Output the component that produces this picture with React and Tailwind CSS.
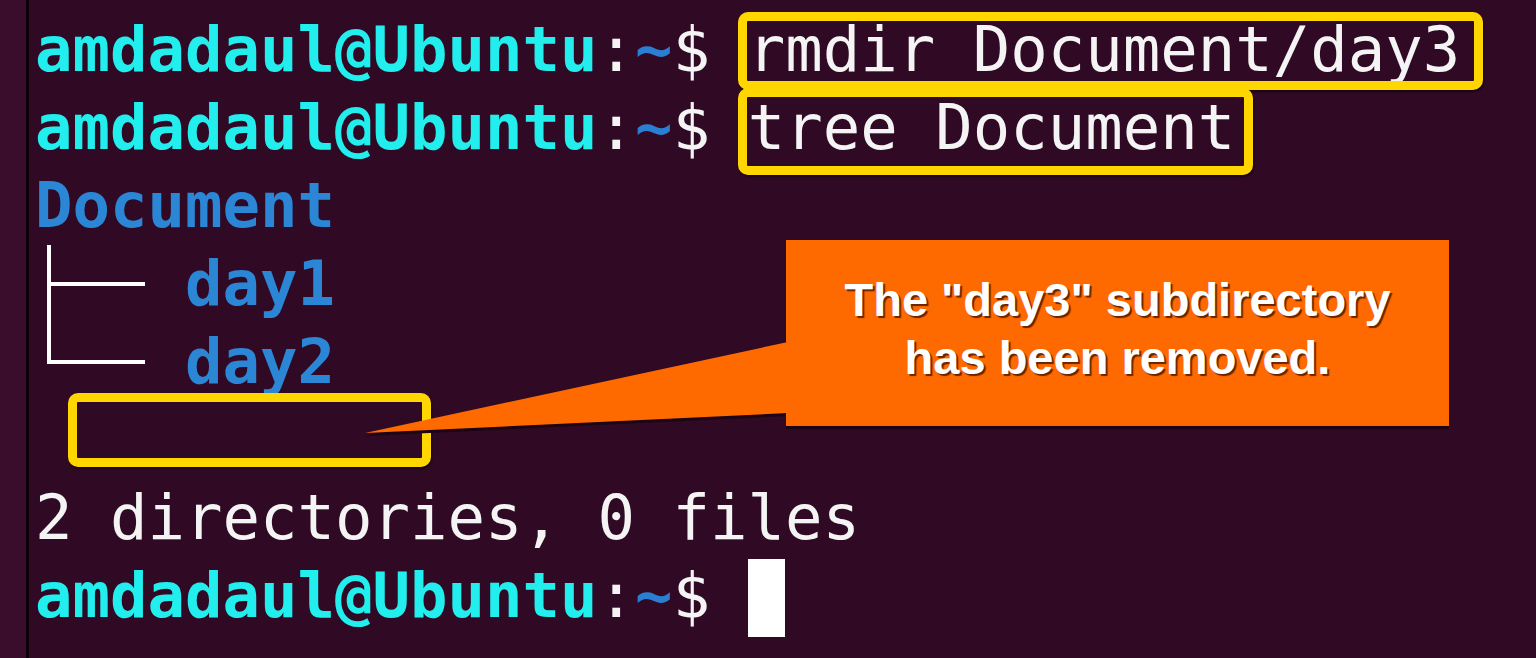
function Prompt() {
  return (
    <>
      <span className="font-bold text-[#22eeee]">amdadaul@Ubuntu</span>
      <span className="text-[#f4f4f4]">:</span>
      <span className="font-bold text-[#2a7fd2]">~</span>
      <span className="text-[#f4f4f4]">$ </span>
    </>
  );
}

function TreeRow({ last, name }) {
  return (
    <div className="flex h-[78px] items-stretch">
      <div className="relative w-[112.5px] shrink-0">
        <div
          className={
            last
              ? "absolute left-[12px] top-0 h-[41px] w-[4px] bg-white"
              : "absolute left-[12px] top-0 h-[78px] w-[4px] bg-white"
          }
        />
        <div className="absolute left-[12px] top-[37px] h-[4px] w-[98px] bg-white" />
      </div>
      <span className="whitespace-pre font-bold text-[#2b86d6]"> {name}</span>
    </div>
  );
}

export default function App() {
  return (
    <div className="relative flex h-[658px] w-full overflow-hidden bg-[#300a24]">
      <div className="w-[26px] shrink-0 bg-[#3a0d2d]" />
      <div className="w-[3px] shrink-0 bg-[#0a0208]" />

      <div className="pl-[6px] pt-[11px] font-['DejaVu_Sans_Mono',monospace] text-[62.3px] leading-[78px] text-[#f4f4f4]">
        <div className="h-[78px] whitespace-pre">
          <Prompt />
          rmdir Document/day3
        </div>
        <div className="h-[78px] whitespace-pre">
          <Prompt />
          tree Document
        </div>
        <div className="h-[78px] font-bold text-[#2b86d6]">Document</div>
        <TreeRow name="day1" />
        <TreeRow last name="day2" />
        <div className="h-[78px]" />
        <div className="h-[78px] whitespace-pre">2 directories, 0 files</div>
        <div className="flex h-[78px] whitespace-pre">
          <Prompt />
          <span className="mt-[2px] h-[78px] w-[37.5px] bg-white" />
        </div>
      </div>

      {/* annotations */}
      <div className="absolute left-[738px] top-[12px] h-[78px] w-[745px] rounded-[10px] border-[9px] border-[#ffd600] shadow-[1px_2px_2px_rgba(0,0,0,0.5)]" />
      <div className="absolute left-[738px] top-[88px] h-[87px] w-[515px] rounded-[10px] border-[9px] border-[#ffd600] shadow-[1px_2px_2px_rgba(0,0,0,0.5)]" />
      <div className="absolute left-[68px] top-[393px] h-[74px] w-[363px] rounded-[10px] border-[9px] border-[#ffd600] shadow-[1px_2px_2px_rgba(0,0,0,0.5)]" />

      <svg
        className="pointer-events-none absolute left-0 top-0"
        width="1536"
        height="658"
        viewBox="0 0 1536 658"
      >
        <polygon points="788,345 365,436 788,416" fill="#1c0614" />
        <polygon points="788,342 365,433 788,413" fill="#ff6a00" />
      </svg>

      <div className="absolute left-[786px] top-[240px] h-[186px] w-[663px] bg-[#ff6a00] pt-[31px] text-center font-['Liberation_Sans',Arial,sans-serif] text-[47px] font-bold leading-[58px] text-white shadow-[0_3px_0_#1c0614] [text-shadow:2px_2px_1px_#6a2400]">
        <div>The "day3" subdirectory</div>
        <div>has been removed.</div>
      </div>
    </div>
  );
}
